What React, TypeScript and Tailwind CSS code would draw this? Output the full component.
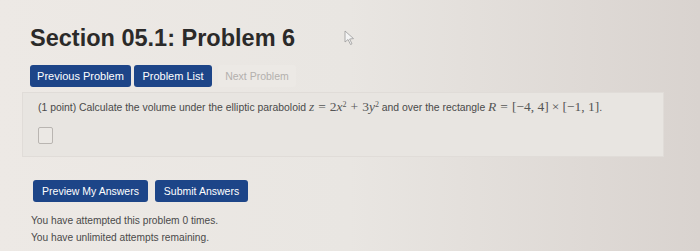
import React from 'react';

export default function App() {
  return (
    <div className="w-[700px] h-[251px] overflow-hidden bg-gradient-to-r from-[#ede9e5] via-[#e9e6e2] to-[#d9d3cf] font-['Liberation_Sans',Arial,sans-serif]">
      <div className="pl-[30px] pt-[24px] relative">
        <h1 className="text-[23.5px] leading-[28px] font-bold text-[#2b2a29]">Section 05.1: Problem 6</h1>
        <svg className="absolute left-[344px] top-[30px]" width="12" height="16" viewBox="0 0 12 16">
          <path d="M1 1 L1 12 L4 9.5 L6.5 14.5 L8 13.8 L5.6 9 L9.5 8.6 Z" fill="#f4f4f4" stroke="#9a9a9a" strokeWidth="0.8" />
        </svg>

        <div className="flex gap-[3px] mt-[13px] items-center">
          <button className="h-[22px] w-[101px] rounded-[3px] bg-[#1d4588] text-white text-[11px] leading-none">Previous Problem</button>
          <button className="h-[22px] w-[78px] rounded-[3px] bg-[#1d4588] text-white text-[11px] leading-none">Problem List</button>
          <button className="h-[22px] w-[78px] ml-[3px] rounded-[3px] bg-[#ece9e5] text-[#b3b0ad] text-[10.5px] leading-none">Next Problem</button>
        </div>
      </div>

      <div className="ml-[22px] mr-[36px] mt-[5px] h-[65px] border border-[#e0dcd8] bg-[#e8e5e1] pl-[15px] pt-[6px]">
        <p className="text-[10.4px] leading-[16px] text-[#4a4a4a] whitespace-nowrap">
          (1 point) Calculate the volume under the elliptic paraboloid{' '}
          <span className="font-['Liberation_Serif',serif] text-[13.5px] text-[#555]">
            <i>z</i><span className="mx-[4px]">=</span>2<i>x</i><sup className="text-[8px]">2</sup><span className="mx-[4px]">+</span>3<i>y</i><sup className="text-[8px]">2</sup>
          </span>{' '}
          and over the rectangle{' '}
          <span className="font-['Liberation_Serif',serif] text-[13.5px] text-[#555]">
            <i>R</i><span className="mx-[4px]">=</span>[−4, 4]<span className="mx-[3px]">×</span>[−1, 1]
          </span>
          .
        </p>
        <div className="mt-[11px] w-[15px] h-[17px] border border-[#b9b5b1] rounded-[2px] bg-[#ebe8e4]" />
      </div>

      <div className="pl-[33px] mt-[23px] flex gap-[7px]">
        <button className="h-[22px] w-[115px] rounded-[3px] bg-[#1d4588] text-white text-[10.5px] leading-none">Preview My Answers</button>
        <button className="h-[22px] w-[93px] rounded-[3px] bg-[#1d4588] text-white text-[10.5px] leading-none">Submit Answers</button>
      </div>

      <div className="pl-[31px] mt-[10px] text-[10.2px] leading-[17px] text-[#4a4a4a]">
        <p>You have attempted this problem 0 times.</p>
        <p>You have unlimited attempts remaining.</p>
      </div>
    </div>
  );
}
